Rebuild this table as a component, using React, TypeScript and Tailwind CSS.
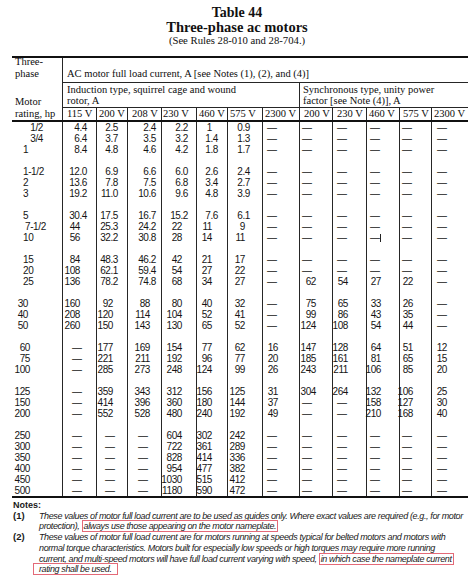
import React from "react";

type Align = "l" | "l2" | "a" | "b" | "b2";
type Row = [string, Align, string[]];

const D = "—";
const DD = "—|";
const six = [D, D, D, D, D, D];

const groups: Row[][] = [
  [
    ["1/2", "a", ["4.4", "2.5", "2.4", "2.2", "1", "0.9", ...six]],
    ["3/4", "a", ["6.4", "3.7", "3.5", "3.2", "1.4", "1.3", ...six]],
    ["1", "l", ["8.4", "4.8", "4.6", "4.2", "1.8", "1.7", ...six]],
  ],
  [
    ["1-1/2", "l", ["12.0", "6.9", "6.6", "6.0", "2.6", "2.4", ...six]],
    ["2", "l", ["13.6", "7.8", "7.5", "6.8", "3.4", "2.7", ...six]],
    ["3", "l", ["19.2", "11.0", "10.6", "9.6", "4.8", "3.9", ...six]],
  ],
  [
    ["5", "l", ["30.4", "17.5", "16.7", "15.2", "7.6", "6.1", ...six]],
    ["7-1/2", "l2", ["44", "25.3", "24.2", "22", "11", "9", ...six]],
    ["10", "l", ["56", "32.2", "30.8", "28", "14", "11", D, D, D, DD, D, D]],
  ],
  [
    ["15", "l", ["84", "48.3", "46.2", "42", "21", "17", ...six]],
    ["20", "l", ["108", "62.1", "59.4", "54", "27", "22", ...six]],
    ["25", "l", ["136", "78.2", "74.8", "68", "34", "27", D, "62", "54", "27", "22", D]],
  ],
  [
    ["30", "b2", ["160", "92", "88", "80", "40", "32", D, "75", "65", "33", "26", D]],
    ["40", "b2", ["208", "120", "114", "104", "52", "41", D, "99", "86", "43", "35", D]],
    ["50", "b2", ["260", "150", "143", "130", "65", "52", D, "124", "108", "54", "44", D]],
  ],
  [
    ["60", "b", [D, "177", "169", "154", "77", "62", "16", "147", "128", "64", "51", "12"]],
    ["75", "b", [D, "221", "211", "192", "96", "77", "20", "185", "161", "81", "65", "15"]],
    ["100", "b", [D, "285", "273", "248", "124", "99", "26", "243", "211", "106", "85", "20"]],
  ],
  [
    ["125", "b", [D, "359", "343", "312", "156", "125", "31", "304", "264", "132", "106", "25"]],
    ["150", "b", [D, "414", "396", "360", "180", "144", "37", D, D, "158", "127", "30"]],
    ["200", "b", [D, "552", "528", "480", "240", "192", "49", D, D, "210", "168", "40"]],
  ],
  [
    ["250", "b", [D, D, D, "604", "302", "242", ...six]],
    ["300", "b", [D, D, D, "722", "361", "289", ...six]],
    ["350", "b", [D, D, D, "828", "414", "336", ...six]],
    ["400", "b", [D, D, D, "954", "477", "382", ...six]],
    ["450", "b", [D, D, D, "1030", "515", "412", ...six]],
    ["500", "b", [D, D, D, "1180", "590", "472", ...six]],
  ],
];

const hpCls: Record<Align, string> = {
  l: "justify-start pl-[11px]",
  l2: "justify-start pl-[13px]",
  a: "justify-end pr-[19px]",
  b: "justify-end pr-[32px]",
  b2: "justify-end pr-[34px]",
};

type Cfg = { dec: string; int: string; dash: string };
const cfg: Cfg[] = [
  { dec: "justify-end pr-[9px]", int: "justify-end pr-[16px]", dash: "justify-start pl-[9px]" },
  { dec: "justify-end pr-[9px]", int: "justify-end pr-[14px]", dash: "justify-start pl-[8px]" },
  { dec: "justify-end pr-[5px]", int: "justify-end pr-[11px]", dash: "justify-start pl-[10px]" },
  { dec: "justify-end pr-[8px]", int: "justify-end pr-[14px]", dash: "justify-start pl-[8px]" },
  { dec: "justify-end pr-[9px]", int: "justify-end pr-[15px]", dash: "justify-start pl-[6px]" },
  { dec: "justify-end pr-[12px]", int: "justify-end pr-[17px]", dash: "justify-start pl-[6px]" },
  { dec: "justify-end pr-[21px]", int: "justify-end pr-[21px]", dash: "justify-start pl-[4px]" },
  { dec: "justify-end pr-[16px]", int: "justify-end pr-[16px]", dash: "justify-start pl-[2px]" },
  { dec: "justify-end pr-[18px]", int: "justify-end pr-[18px]", dash: "justify-start pl-[4px]" },
  { dec: "justify-end pr-[18px]", int: "justify-end pr-[18px]", dash: "justify-start pl-[3px]" },
  { dec: "justify-end pr-[18px]", int: "justify-end pr-[18px]", dash: "justify-start pl-[2px]" },
  { dec: "justify-end pr-[21px]", int: "justify-end pr-[21px]", dash: "justify-start pl-[5px]" },
];

const GRID =
  "grid grid-cols-[51px_34px_31px_34px_35px_31px_35px_37px_33px_34px_33px_32px_36px]";

function Cell({ v, i }: { v: string; i: number }) {
  const c = cfg[i];
  const last = i === 11;
  const border = last ? "" : "border-r border-[#262626]";
  let align = c.int;
  if (v === D || v === DD) align = c.dash;
  else if (v.includes(".")) align = c.dec;
  return (
    <div className={`flex items-center h-[11px] ${border} ${align}`}>
      {v === DD ? (
        <span className="inline-flex items-center">
          {D}
          <span className="w-px h-[8px] bg-[#222]" />
        </span>
      ) : (
        v
      )}
    </div>
  );
}

function BodyRow({ row }: { row: Row }) {
  const [hp, al, vals] = row;
  return (
    <div className={GRID}>
      <div className={`flex items-center h-[11px] border-r border-[#262626] ${hpCls[al]}`}>{hp}</div>
      {vals.map((v, i) => (
        <Cell key={i} v={v} i={i} />
      ))}
    </div>
  );
}

function Spacer() {
  return (
    <div className={GRID}>
      {Array.from({ length: 13 }).map((_, i) => (
        <div key={i} className={i === 12 ? "h-[11px]" : "h-[11px] border-r border-[#262626]"} />
      ))}
    </div>
  );
}

const volts: [string, string, string][] = [
  ["115 V", "w-[34px]", "pl-[4px]"],
  ["200 V", "w-[31px]", "pl-[2px]"],
  ["208 V", "w-[34px]", "pl-[4px]"],
  ["230 V", "w-[35px]", "pl-[1px]"],
  ["460 V", "w-[31px]", "pl-[2px]"],
  ["575 V", "w-[35px]", "pl-[2px]"],
  ["2300 V", "w-[37px]", "pl-[2px]"],
  ["200 V", "w-[33px]", "pl-[4px]"],
  ["230 V", "w-[34px]", "pl-[4px]"],
  ["460 V", "w-[33px]", "pl-[2px]"],
  ["575 V", "w-[32px]", "pl-[3px]"],
  ["2300 V", "w-[36px]", "pl-[2px]"],
];

export default function App() {
  return (
    <div className="w-[474px] h-[577px] bg-white text-[#1a1a1a] overflow-hidden">
      {/* Title */}
      <div className="h-[56px] flex flex-col items-center pt-[6px] font-['Liberation_Serif','Times_New_Roman',serif] text-[#111]">
        <div className="text-[14px] leading-[14px] font-bold">Table 44</div>
        <div className="text-[14.5px] leading-[14px] font-bold">Three-phase ac motors</div>
        <div className="text-[10.7px] leading-[12px]">(See Rules 28-010 and 28-704.)</div>
      </div>

      {/* Table */}
      <div className="ml-[12px] w-[456px]">
        {/* Header */}
        <div className="flex border-t-2 border-b-2 border-[#111] font-['Liberation_Serif','Times_New_Roman',serif] text-[10.5px] text-[#0d0d0d]">
          <div className="w-[51px] shrink-0 border-r border-[#262626] flex flex-col justify-between pl-[3px] leading-[12px]">
            <div className="-mt-[2px]">
              Three-
              <br />
              phase
            </div>
            <div>
              Motor
              <br />
              rating, hp
            </div>
          </div>
          <div className="flex-1 flex flex-col">
            <div className="h-[25px] border-b border-[#262626] flex items-end pl-[4px] pb-[2px] leading-[12px] whitespace-nowrap">
              AC motor full load current, A [see Notes (1), (2), and (4)]
            </div>
            <div className="h-[25px] border-b border-[#262626] flex leading-[11px]">
              <div className="w-[237px] shrink-0 border-r border-[#262626] pl-[4px] pt-[1px] whitespace-nowrap">
                Induction type, squirrel cage and wound
                <br />
                rotor, A
              </div>
              <div className="flex-1 pl-[3px] pt-[1px] whitespace-nowrap">
                Synchronous type, unity power
                <br />
                factor [see Note (4)], A
              </div>
            </div>
            <div className="h-[12px] flex leading-[12px]">
              {volts.map(([t, w, p], i) => (
                <div
                  key={i}
                  className={`${w} ${p} whitespace-nowrap ${i === 11 ? "" : "border-r border-[#262626]"}`}
                >
                  {t}
                </div>
              ))}
            </div>
          </div>
        </div>

        {/* Body */}
        <div className="border-b-2 border-[#111] font-['Liberation_Sans',Arial,sans-serif] text-[10px] leading-[11px] tracking-[-0.4px] text-[#141414]">
          {groups.map((g, gi) => (
            <React.Fragment key={gi}>
              {gi > 0 && <Spacer />}
              {g.map((r, ri) => (
                <BodyRow key={ri} row={r} />
              ))}
            </React.Fragment>
          ))}
        </div>
      </div>

      {/* Notes */}
      <div className="pl-[13px] pt-[2px] font-['Liberation_Sans',Arial,sans-serif] text-[9px] leading-[10.7px] text-[#1a1a1a]">
        <div className="font-bold">Notes:</div>
        <div className="flex">
          <div className="w-[26px] shrink-0 font-bold text-[9.5px]">(1)</div>
          <div className="italic tracking-[-0.38px] whitespace-nowrap">
            These values of motor full load current are to be used as guides only. Where exact values are required (e.g., for motor
            <br />
            protection),{" "}
            <span className="border border-[#e46a78] px-[1px]">always use those appearing on the motor nameplate.</span>
          </div>
        </div>
        <div className="flex">
          <div className="w-[26px] shrink-0 font-bold text-[9.5px]">(2)</div>
          <div className="italic tracking-[-0.38px] whitespace-nowrap">
            These values of motor full load current are for motors running at speeds typical for belted motors and motors with
            <br />
            normal torque characteristics. Motors built for especially low speeds or high torques may require more running
            <br />
            current, and multi-speed motors will have full load current varying with speed,{" "}
            <span className="border border-[#e46a78] px-[1px]">in which case the nameplate current</span>
            <br />
            <span className="border border-[#e46a78] -ml-[6px] pl-[5px] pr-[5px]">rating shall be used.</span>
          </div>
        </div>
      </div>
    </div>
  );
}
